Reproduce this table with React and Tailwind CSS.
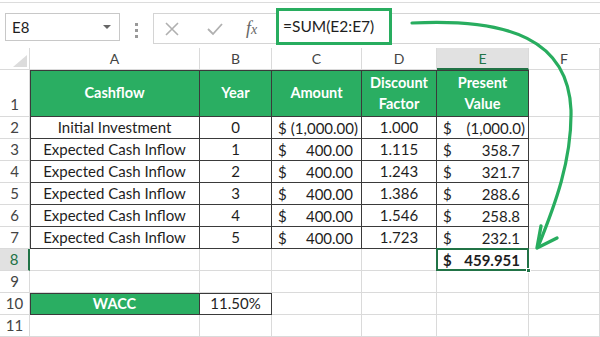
import React from 'react';

const GREEN = 'bg-[#2aae62]';

const rows = [
  { n: 2, a: 'Initial Investment', b: '0', c: '(1,000.00)', cNeg: true, d: '1.000', e: '(1,000.0)', eNeg: true },
  { n: 3, a: 'Expected Cash Inflow', b: '1', c: '400.00', d: '1.115', e: '358.7' },
  { n: 4, a: 'Expected Cash Inflow', b: '2', c: '400.00', d: '1.243', e: '321.7' },
  { n: 5, a: 'Expected Cash Inflow', b: '3', c: '400.00', d: '1.386', e: '288.6' },
  { n: 6, a: 'Expected Cash Inflow', b: '4', c: '400.00', d: '1.546', e: '258.8' },
  { n: 7, a: 'Expected Cash Inflow', b: '5', c: '400.00', d: '1.723', e: '232.1' },
];

const grid = 'border-r border-b border-[#dadada]';
const dark = 'border-r border-b border-[#3a3a3a]';

const RowHead = ({ children, active, tall }) => (
  <div
    className={`flex justify-center text-[15px] ${tall ? 'items-end pb-[1px]' : 'items-center'} ${
      active
        ? 'bg-[#e1e1e1] text-[#217346] border-b border-[#dadada] border-r-2 border-r-[#217346]'
        : 'text-[#444] border-r border-b border-[#dadada]'
    }`}
  >
    {children}
  </div>
);

const Money = ({ value, neg, bold }) => (
  <div className={`flex items-center justify-between pl-[6px] pr-[3px] ${bold ? 'font-bold' : ''}`}>
    <span>$</span>
    <span className={neg ? '' : 'pr-[5px]'}>{value}</span>
  </div>
);

export default function App() {
  return (
    <div
      className="relative w-[600px] h-[337px] overflow-hidden bg-white text-[#1e1e1e]"
      style={{ fontFamily: 'Lato, "Open Sans", sans-serif' }}
    >
      {/* Formula bar */}
      <div className="mt-[2px] border-t border-[#dcdcdc] h-[46px] flex items-start">
        <div className="ml-[5px] mt-[10px] w-[115px] h-[28px] border border-[#c8c8c8] flex items-center justify-between pl-[6px] pr-[8px] text-[15px]">
          <span>E8</span>
          <span className="w-0 h-0 border-l-[4px] border-r-[4px] border-t-[4px] border-l-transparent border-r-transparent border-t-[#666]" />
        </div>
        <div className="w-[33px] h-[38px] flex flex-col items-center justify-center gap-[3px] mt-[8px]">
          <span className="w-[3px] h-[3px] bg-[#999]" />
          <span className="w-[3px] h-[3px] bg-[#999]" />
          <span className="w-[3px] h-[3px] bg-[#999]" />
        </div>
        <div className="mt-[10px] h-[31px] w-[123px] border-y border-l border-[#d4d4d4] flex items-center">
          <svg width="20" height="20" viewBox="0 0 20 20" className="ml-[8px]">
            <path d="M4 4 L16 16 M16 4 L4 16" stroke="#b0b0b0" strokeWidth="1.6" />
          </svg>
          <svg width="20" height="20" viewBox="0 0 20 20" className="ml-[23px]">
            <path d="M3 10 L8 15 L17 5" stroke="#b0b0b0" strokeWidth="1.8" fill="none" />
          </svg>
          <span
            className="ml-[21px] text-[18px] italic text-[#666]"
            style={{ fontFamily: '"Liberation Serif", serif' }}
          >
            f<span className="text-[14px]">x</span>
          </span>
        </div>
        <div className="mt-[5px] h-[37px] w-[116px] border-[3px] border-[#28ad5f] flex items-center pl-[4px] text-[15.5px]">
          =SUM(E2:E7)
        </div>
        <div className="mt-[10px] h-[31px] flex-1 border-y border-[#d4d4d4]" />
      </div>

      {/* Sheet */}
      <div className="grid grid-cols-[30px_170px_72px_90px_75px_92px_1fr] grid-rows-[22px_47px_repeat(10,22px)] text-[15px]">
        {/* column headers */}
        <div className={`${grid} relative`}>
          <svg width="14" height="12" className="absolute right-[2px] bottom-[2px]">
            <polygon points="14,0 14,12 0,12" fill="#dcdcdc" />
          </svg>
        </div>
        {['A', 'B', 'C', 'D'].map((l) => (
          <div key={l} className={`${grid} flex items-center justify-center text-[#444] text-[14px]`}>
            {l}
          </div>
        ))}
        <div className="flex items-center justify-center text-[#217346] text-[14px] bg-[#e1e1e1] border-r border-[#dadada] border-b-2 border-b-[#217346]">
          E
        </div>
        <div className={`${grid} flex items-center justify-center text-[#444] text-[14px]`}>F</div>

        {/* row 1 headers */}
        <RowHead tall>1</RowHead>
        <div className={`${dark} ${GREEN} shadow-[inset_1px_1px_0_#3a3a3a] flex items-center justify-center text-white font-bold text-[14.5px]`}>
          Cashflow
        </div>
        <div className={`${dark} ${GREEN} shadow-[inset_0_1px_0_#3a3a3a] flex items-center justify-center text-white font-bold text-[14.5px]`}>
          Year
        </div>
        <div className={`${dark} ${GREEN} shadow-[inset_0_1px_0_#3a3a3a] flex items-center justify-center text-white font-bold text-[14.5px]`}>
          Amount
        </div>
        <div className={`${dark} ${GREEN} shadow-[inset_0_1px_0_#3a3a3a] flex flex-col items-center justify-center text-white font-bold text-[14.5px] leading-[21px]`}>
          <span>Discount</span>
          <span>Factor</span>
        </div>
        <div className={`${dark} ${GREEN} shadow-[inset_0_1px_0_#3a3a3a] flex flex-col items-center justify-center text-white font-bold text-[14.5px] leading-[21px]`}>
          <span>Present</span>
          <span>Value</span>
        </div>
        <div className={grid} />

        {/* data rows */}
        {rows.map((r) => (
          <React.Fragment key={r.n}>
            <RowHead>{r.n}</RowHead>
            <div className={`${dark} shadow-[inset_1px_0_0_#3a3a3a] flex items-center justify-center`}>{r.a}</div>
            <div className={`${dark} flex items-center justify-center`}>{r.b}</div>
            <div className={dark}>
              <Money value={r.c} neg={r.cNeg} />
            </div>
            <div className={`${dark} flex items-center justify-center`}>{r.d}</div>
            <div className={dark}>
              <Money value={r.e} neg={r.eNeg} />
            </div>
            <div className={grid} />
          </React.Fragment>
        ))}

        {/* row 8 */}
        <RowHead active>8</RowHead>
        <div className={grid} />
        <div className={grid} />
        <div className={grid} />
        <div className={grid} />
        <div className={`${grid} relative flex`}>
          <div className="flex-1">
            <Money value="459.951" bold />
          </div>
          <span className="absolute -left-px -top-px -right-px -bottom-px border-2 border-[#217346]" />
          <span className="absolute -right-[3px] -bottom-[3px] w-[5px] h-[5px] bg-[#217346] border border-white" />
        </div>
        <div className={grid} />

        {/* row 9 */}
        <RowHead>9</RowHead>
        {[0, 1, 2, 3, 4, 5].map((i) => (
          <div key={i} className={grid} />
        ))}

        {/* row 10 */}
        <RowHead>10</RowHead>
        <div className={`${dark} ${GREEN} shadow-[inset_1px_1px_0_#3a3a3a] flex items-center justify-center text-white font-bold text-[14.5px]`}>
          WACC
        </div>
        <div className={`${dark} shadow-[inset_0_1px_0_#3a3a3a] flex items-center justify-center`}>11.50%</div>
        {[0, 1, 2, 3].map((i) => (
          <div key={i} className={grid} />
        ))}

        {/* row 11 */}
        <RowHead>11</RowHead>
        {[0, 1, 2, 3, 4, 5].map((i) => (
          <div key={i} className={grid} />
        ))}
      </div>

      {/* annotation arrow */}
      <svg className="absolute inset-0 pointer-events-none" width="600" height="337">
        <path
          d="M412 23 C 510 18 568 40 571 110 C 572 160 555 205 538 247"
          stroke="#28ad5f"
          strokeWidth="3.2"
          fill="none"
          strokeLinecap="round"
        />
        <path
          d="M541 226 L537 248 L557 238"
          stroke="#28ad5f"
          strokeWidth="3.4"
          fill="none"
          strokeLinecap="round"
          strokeLinejoin="round"
        />
      </svg>
    </div>
  );
}
